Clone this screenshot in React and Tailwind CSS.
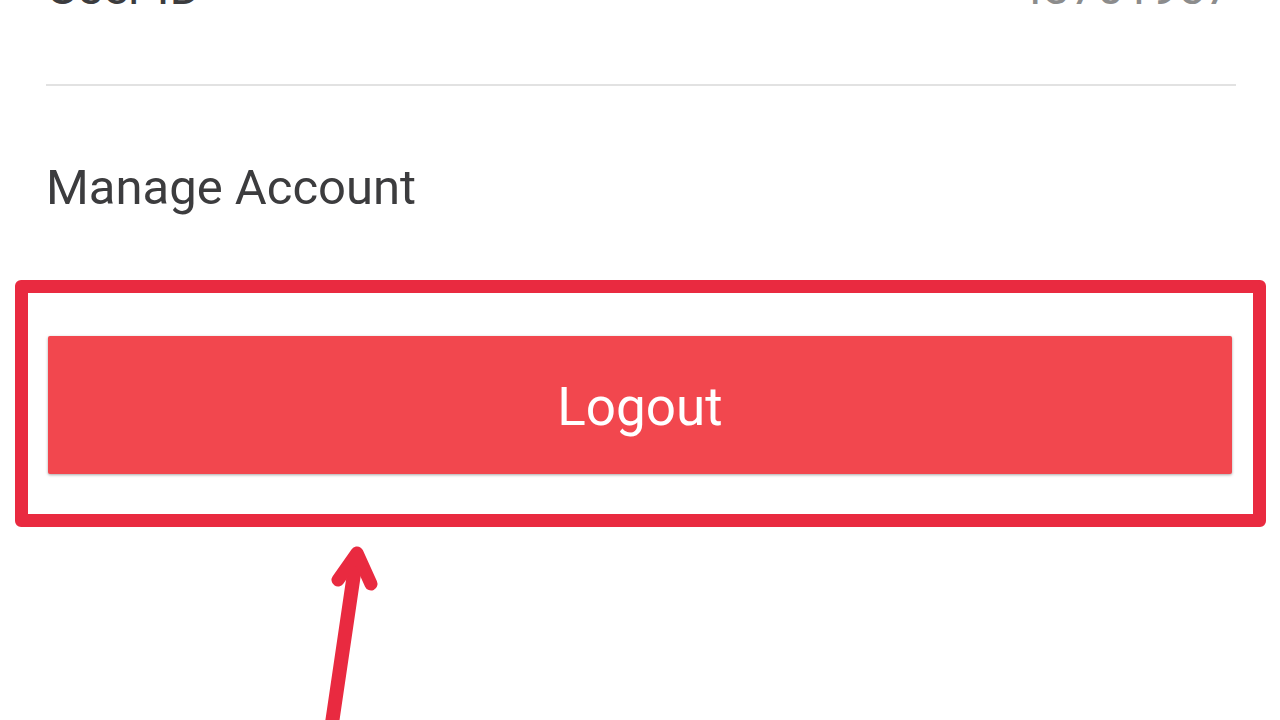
import React from 'react'

export default function App(){
  return (
    <div className="relative w-[1280px] h-[720px] overflow-hidden bg-white font-['Roboto',sans-serif]">
      <div className="flex justify-between items-end pl-[47px] pr-[48px] h-[16px] -mt-[10px] text-[48px] leading-none">
        <span className="text-[#3c3c3e] mb-[-6px]">User ID</span>
        <span className="text-[#8c8c8c] mb-[-6px]">43701957</span>
      </div>
      <div className="ml-[46px] mt-[78px] w-[1190px] h-[2px] bg-[#e2e2e2]"></div>
      <div className="pl-[46px] mt-[76px] h-[50px] flex items-center text-[49px] leading-none text-[#3c3c3e]">
        Manage Account
      </div>
      <div className="ml-[15px] mt-[68px] w-[1251px] h-[247px] border-[13px] border-[#e92a40] rounded-[6px] pt-[43px] pl-[20px]">
        <button className="w-[1184px] h-[138px] pt-[4px] bg-[#f2474e] text-white text-[53px] leading-none flex items-center justify-center shadow-[0_1px_3px_rgba(0,0,0,0.35)] rounded-[2px]">
          Logout
        </button>
      </div>
      <svg className="absolute left-0 top-0" width="1280" height="720" viewBox="0 0 1280 720">
        <line x1="331" y1="730" x2="356" y2="560" stroke="#e92a40" strokeWidth="14" strokeLinecap="round" />
        <polyline points="338,580 357,553 371,584" fill="none" stroke="#e92a40" strokeWidth="13" strokeLinecap="round" strokeLinejoin="round" />
      </svg>
    </div>);
}
